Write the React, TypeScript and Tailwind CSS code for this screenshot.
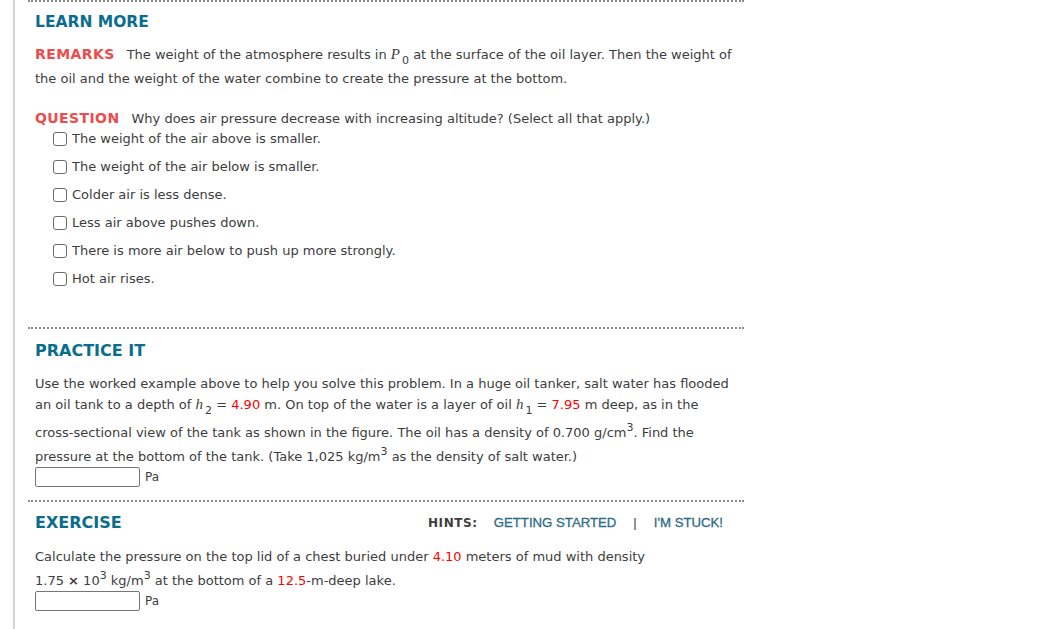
const body = "font-['DejaVu_Sans',Verdana,sans-serif] text-[13px] text-[#3d3d3d]";
const heading = "text-[#0b6d8e] font-bold font-['DejaVu_Sans',sans-serif]";
const red = "text-[#ff0000]";
const label = "text-[#ef4b4b] font-bold text-[14px] tracking-[0.4px] mr-3";

const Divider = () => <div className="border-t-2 border-dotted border-[#8a8a8a]" />;

const MathVar = ({ v, sub }: { v: string; sub: string }) => (
  <span>
    <i className="font-['Liberation_Serif',serif] text-[15px]">{v}</i>
    <span className="relative top-[5px] text-[11px] ml-[2px]">{sub}</span>
  </span>
);

const Sup = ({ c }: { c: string }) => <span className="relative top-[-6px] text-[11px]">{c}</span>;

const Box = () => (
  <div className="flex items-center gap-[5px] h-5">
    <div className="w-[105px] h-5 border border-[#767676] rounded-[2px] bg-white" />
    <span className="text-[12px]">Pa</span>
  </div>
);

const options = [
  "The weight of the air above is smaller.",
  "The weight of the air below is smaller.",
  "Colder air is less dense.",
  "Less air above pushes down.",
  "There is more air below to push up more strongly.",
  "Hot air rises.",
];

export default function App() {
  return (
    <div className={`${body} bg-white w-[1057px] h-[629px] overflow-hidden pl-[13px]`}>
      <div className="border-l-2 border-[#d4d4d4] h-full pl-[13px]">
        <div className="w-[716px]">
          <Divider />
          <div className="px-[7px]">
            <div className={`${heading} text-[15.5px] leading-5 mt-[10px]`}>LEARN MORE</div>
            <div className="leading-6 mt-[10px]">
              <div className="h-6">
                <span className={label}>REMARKS</span>
                The weight of the atmosphere results in <MathVar v="P" sub="0" /> at the surface of the oil layer. Then the weight of
              </div>
              <div className="h-6 pt-[1px]">the oil and the weight of the water combine to create the pressure at the bottom.</div>
            </div>
            <div className="leading-5 h-5 mt-[18px]">
              <span className={label}>QUESTION</span>
              Why does air pressure decrease with increasing altitude? (Select all that apply.)
            </div>
            <div className="flex flex-col gap-2 ml-[18px] mt-[1px]">
              {options.map((o) => (
                <label key={o} className="flex items-center gap-[5px] h-5">
                  <span className="w-[14px] h-[14px] border-[1.5px] border-[#6b6b6b] rounded-[3px]" />
                  <span>{o}</span>
                </label>
              ))}
            </div>
          </div>

          <div className="mt-[38px]">
            <Divider />
          </div>
          <div className="px-[7px]">
            <div className={`${heading} text-[16px] leading-5 mt-[12px]`}>PRACTICE IT</div>
            <div className="leading-5 mt-[13px]">
              <div className="h-5">Use the worked example above to help you solve this problem. In a huge oil tanker, salt water has flooded</div>
              <div className="h-[29px]">
                an oil tank to a depth of <MathVar v="h" sub="2" /> = <span className={red}>4.90</span> m. On top of the water is a layer of oil <MathVar v="h" sub="1" /> = <span className={red}>7.95</span> m deep, as in the
              </div>
              <div className="h-6">
                cross-sectional view of the tank as shown in the figure. The oil has a density of 0.700 g/cm<Sup c="3" />. Find the
              </div>
              <div className="h-5">
                pressure at the bottom of the tank. (Take 1,025 kg/m<Sup c="3" /> as the density of salt water.)
              </div>
            </div>
            <Box />
          </div>

          <div className="mt-[13px]">
            <Divider />
          </div>
          <div className="px-[7px]">
            <div className="flex items-center h-5 mt-[11px] pr-[14px]">
              <div className={`${heading} text-[16px]`}>EXERCISE</div>
              <div className="ml-auto flex items-center font-['Liberation_Sans',Arial,sans-serif] text-[13.2px]">
                <span className="font-bold text-[#3d3d3d] font-['DejaVu_Sans',sans-serif] text-[12px] tracking-[0.6px]">HINTS:</span>
                <span className="text-[#2d6b86] ml-[16px] [-webkit-text-stroke:0.3px_#2d6b86]">GETTING STARTED</span>
                <span className="text-[#3d3d3d] mx-[17px]">|</span>
                <span className="text-[#2d6b86] [-webkit-text-stroke:0.3px_#2d6b86]">I'M STUCK!</span>
              </div>
            </div>
            <div className="leading-5 mt-[14px]">
              <div className="h-6">
                Calculate the pressure on the top lid of a chest buried under <span className={red}>4.10</span> meters of mud with density
              </div>
              <div className="h-5">
                1.75 <span className="font-bold">×</span> 10<Sup c="3" /> kg/m<Sup c="3" /> at the bottom of a <span className={red}>12.5</span>-m-deep lake.
              </div>
            </div>
            <Box />
          </div>
        </div>
      </div>
    </div>
  );
}
